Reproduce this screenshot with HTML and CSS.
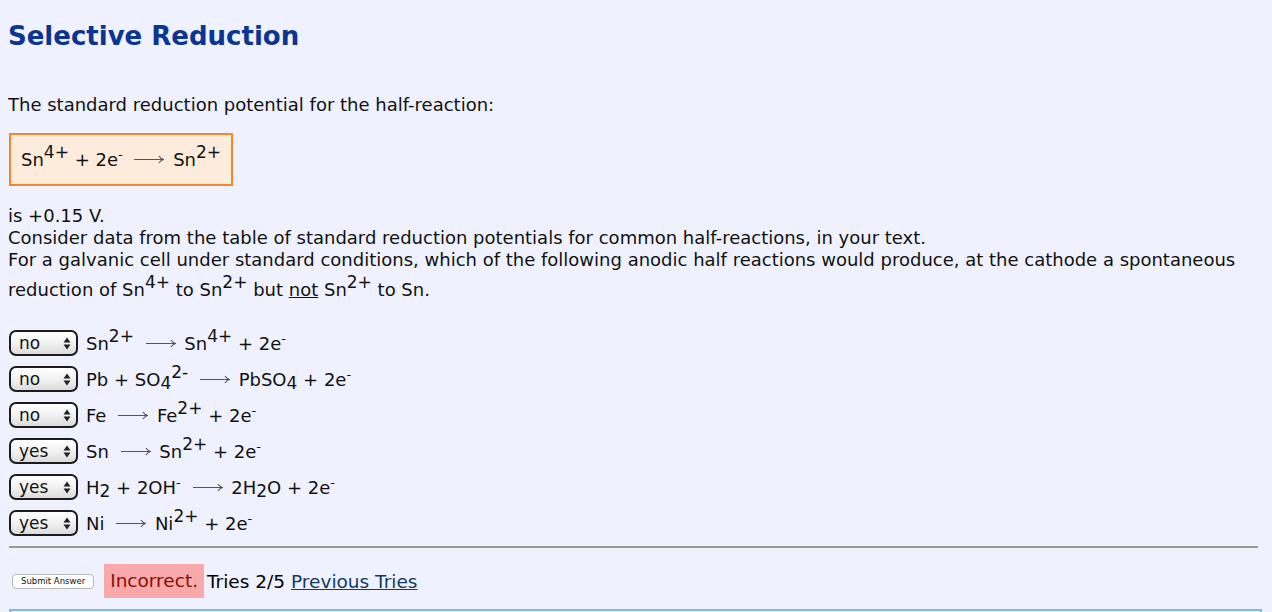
FILE: index.html
```html
<!DOCTYPE html>
<html lang="en">
<head>
  <meta charset="UTF-8" />
  <title>Selective Reduction</title>
  <link rel="stylesheet" href="styles.css">
</head>
<body>

  <h1 class="title">Selective Reduction</h1>

  <p class="intro">The standard reduction potential for the half-reaction:</p>

  <div class="eq-box" id="given"></div>

  <div class="question">
    is +0.15 V.<br>
    Consider data from the table of standard reduction potentials for common half-reactions, in your text.<br>
    For a galvanic cell under standard conditions, which of the following anodic half reactions would produce, at the cathode a spontaneous<br>
    <span class="tall">reduction of Sn<sup>4+</sup> to Sn<sup>2+</sup> but <u>not</u> Sn<sup>2+</sup> to Sn.</span>
  </div>

  <div class="answers" id="answers">
    <!-- rows injected below -->
  </div>

  <hr class="rule">

  <div class="submit-row">
    <button class="submit">Submit Answer</button>
    <span class="incorrect">Incorrect.</span>
    <span class="tries">Tries 2/5</span>
    <a class="prev" href="#">Previous Tries</a>
  </div>

  <div class="next-box"></div>

  <script>
    const arrow = '<svg class="arrow" width="30" height="10" viewBox="0 0 30 10"><path d="M0 5.5 H29 M25 2 Q26.5 4.5 29.5 5.5 Q26.5 6.5 25 9" fill="none" stroke="#555" stroke-width="1.1"/></svg>';
    const minus = '<sup class="minus">-</sup>';

    document.getElementById('given').innerHTML =
      'Sn<sup>4+</sup> + 2e' + minus + ' ' + arrow + ' Sn<sup>2+</sup>';

    const rows = [
      { pick: 'no',  eq: 'Sn<sup>2+</sup> ' + arrow + ' Sn<sup>4+</sup> + 2e' + minus },
      { pick: 'no',  eq: 'Pb + SO<sub>4</sub><sup>2-</sup> ' + arrow + ' PbSO<sub>4</sub> + 2e' + minus },
      { pick: 'no',  eq: 'Fe ' + arrow + ' Fe<sup>2+</sup> + 2e' + minus },
      { pick: 'yes', eq: 'Sn ' + arrow + ' Sn<sup>2+</sup> + 2e' + minus },
      { pick: 'yes', eq: 'H<sub>2</sub> + 2OH' + minus + ' ' + arrow + ' 2H<sub>2</sub>O + 2e' + minus },
      { pick: 'yes', eq: 'Ni ' + arrow + ' Ni<sup>2+</sup> + 2e' + minus }
    ];

    const list = document.getElementById('answers');
    const spin = '<svg class="spin" width="8" height="13" viewBox="0 0 8 13"><path d="M4 0.5 L7.5 5.5 L0.5 5.5 Z M4 12.5 L7.5 7.5 L0.5 7.5 Z" fill="#222"/></svg>';

    rows.forEach(r => {
      const row = document.createElement('div');
      row.className = 'row';
      row.innerHTML = `
        <div class="select"><span class="val">${r.pick}</span>${spin}</div>
        <span class="eq">${r.eq}</span>
      `;
      list.appendChild(row);
    });
  </script>

</body>
</html>
```

FILE: styles.css
```css
body {
  margin: 0 8px;
  font-family: Verdana, 'DejaVu Sans', sans-serif;
  font-size: 18px;
  background: #eff1fe;
  color: #111;
}

.title {
  margin: 20px 0 0 0;
  font-size: 26px;
  font-weight: bold;
  color: #0b3592;
  line-height: 32px;
}

.intro {
  margin: 42px 0 0 0;
  line-height: 22px;
}

.eq-box {
  width: fit-content;
  margin-top: 17px;
  margin-left: 1px;
  padding: 13px 10px 12px 10px;
  background: #fdecdc;
  border: 2px solid #f5862e;
  line-height: 24px;
}

sup {
  font-size: 17px;
  line-height: 0;
  vertical-align: 8px;
}

sub {
  font-size: 17px;
  line-height: 0;
  vertical-align: -3px;
}

sup.minus {
  font-size: 13px;
  vertical-align: 7px;
}

.arrow {
  margin: 0 3px 0 6px;
  vertical-align: 2px;
}

.question {
  margin-top: 19px;
  line-height: 22px;
}

.tall {
  display: inline-block;
  padding-top: 8px;
}

.answers {
  margin-top: 24px;
}

.row {
  display: flex;
  align-items: center;
  height: 36px;
  gap: 8px;
}

.select {
  box-sizing: border-box;
  width: 69px;
  height: 26px;
  margin-left: 1px;
  border: 2px solid #1c1c1c;
  border-radius: 7px;
  background: linear-gradient(#ffffff, #f2f2f2 50%, #dcdcdc);
  display: flex;
  align-items: center;
  justify-content: space-between;
  padding: 0 5px 0 8px;
}

.select .val {
  font-size: 17px;
}

.eq {
  white-space: nowrap;
}

.rule {
  margin: 5px 6px 0 1px;
  border: none;
  border-top: 2px solid #999;
  border-bottom: 1px solid #f4f4f4;
}

.submit-row {
  display: flex;
  align-items: center;
  margin-top: 15px;
  height: 34px;
}

.submit {
  margin-left: 4px;
  font-family: 'DejaVu Sans', sans-serif;
  font-size: 8.5px;
  height: 15px;
  padding: 0 8px;
  background: #fff;
  border: 1px solid #b8b8b8;
  border-radius: 4px;
  color: #111;
  line-height: 12px;
}

.incorrect {
  margin-left: 10px;
  background: #f9a9a9;
  color: #8a0c0c;
  font-size: 18.5px;
  line-height: 34px;
  padding: 0 6px;
}

.tries {
  margin-left: 3px;
  font-size: 18.5px;
  color: #000;
}

.prev {
  margin-left: 6px;
  font-size: 18.5px;
  color: #0f3a68;
}

.next-box {
  margin-top: 11px;
  margin-left: 1px;
  margin-right: 2px;
  height: 40px;
  border: 2px solid #80b8ee;
}
```
